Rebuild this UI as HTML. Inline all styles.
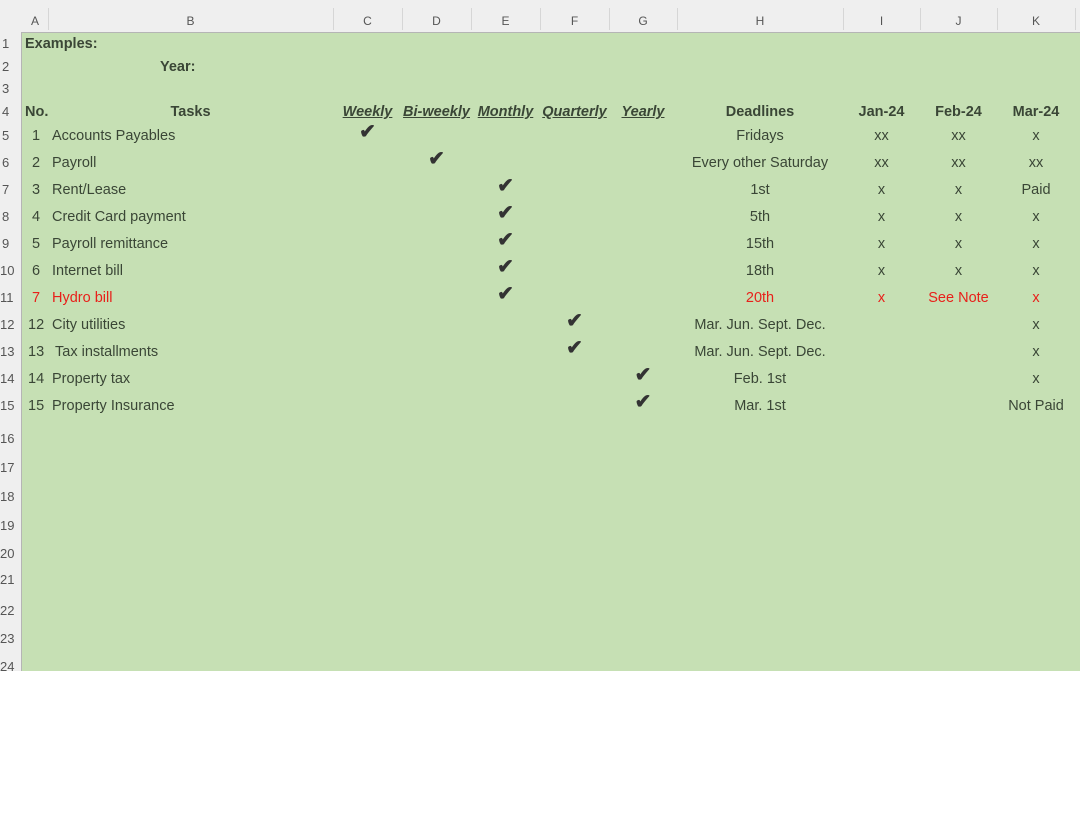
<!DOCTYPE html>
<html><head><meta charset="utf-8"><style>
body{margin:0;width:1080px;height:817px;background:#fff;position:relative;overflow:hidden;font-family:"Liberation Sans",sans-serif;}
.hdr{position:absolute;left:0;top:0;width:1080px;height:32px;background:#efefef;border-bottom:1px solid #b5b5b5;}
.rh{position:absolute;left:0;top:32px;width:21px;height:639px;background:#efefef;border-right:1px solid #b5b5b5;}
.g{position:absolute;left:22px;top:33px;width:1058px;height:638px;background:#c6e0b4;}
.t{position:absolute;height:18px;line-height:18px;font-size:14.5px;color:#3a4636;white-space:nowrap;}
.c{text-align:center;}
.b{font-weight:bold;}
.u{font-weight:bold;font-style:italic;text-decoration:underline;}
.r{color:#e8201a;}
.ch{font-size:12px;color:#555;}
.rn{font-size:13px;color:#555;}
.ck{font-size:20px;font-weight:bold;color:#333;}
.sep{position:absolute;top:8px;width:1px;height:22px;background:#d6d6d6;}
.hs{position:absolute;left:0;width:21px;height:1px;background:#d6d6d6;}
</style></head><body>
<div class="hdr"></div><div class="rh"></div><div class="g"></div>
<div class="t ch c" style="left:22px;width:26px;top:12px">A</div>
<div class="t ch c" style="left:48px;width:285px;top:12px">B</div>
<div class="t ch c" style="left:333px;width:69px;top:12px">C</div>
<div class="t ch c" style="left:402px;width:69px;top:12px">D</div>
<div class="t ch c" style="left:471px;width:69px;top:12px">E</div>
<div class="t ch c" style="left:540px;width:69px;top:12px">F</div>
<div class="t ch c" style="left:609px;width:68px;top:12px">G</div>
<div class="t ch c" style="left:677px;width:166px;top:12px">H</div>
<div class="t ch c" style="left:843px;width:77px;top:12px">I</div>
<div class="t ch c" style="left:920px;width:77px;top:12px">J</div>
<div class="t ch c" style="left:997px;width:78px;top:12px">K</div>
<div class="sep" style="left:48px"></div><div class="sep" style="left:333px"></div><div class="sep" style="left:402px"></div><div class="sep" style="left:471px"></div><div class="sep" style="left:540px"></div><div class="sep" style="left:609px"></div><div class="sep" style="left:677px"></div><div class="sep" style="left:843px"></div><div class="sep" style="left:920px"></div><div class="sep" style="left:997px"></div><div class="sep" style="left:1075px"></div>
<div class="t rn" style="left:2px;top:35px">1</div>
<div class="t rn" style="left:2px;top:58px">2</div>
<div class="t rn" style="left:2px;top:80px">3</div>
<div class="t rn" style="left:2px;top:103px">4</div>
<div class="t rn" style="left:2px;top:127px">5</div>
<div class="t rn" style="left:2px;top:154px">6</div>
<div class="t rn" style="left:2px;top:181px">7</div>
<div class="t rn" style="left:2px;top:208px">8</div>
<div class="t rn" style="left:2px;top:235px">9</div>
<div class="t rn" style="left:0px;top:262px">10</div>
<div class="t rn" style="left:0px;top:289px">11</div>
<div class="t rn" style="left:0px;top:316px">12</div>
<div class="t rn" style="left:0px;top:343px">13</div>
<div class="t rn" style="left:0px;top:370px">14</div>
<div class="t rn" style="left:0px;top:397px">15</div>
<div class="t rn" style="left:0px;top:430px">16</div>
<div class="t rn" style="left:0px;top:459px">17</div>
<div class="t rn" style="left:0px;top:488px">18</div>
<div class="t rn" style="left:0px;top:517px">19</div>
<div class="t rn" style="left:0px;top:545px">20</div>
<div class="t rn" style="left:0px;top:571px">21</div>
<div class="t rn" style="left:0px;top:602px">22</div>
<div class="t rn" style="left:0px;top:630px">23</div>
<div class="t rn" style="left:0px;top:658px">24</div>
<div class="t b" style="left:25px;top:35px">Examples:</div>
<div class="t b" style="left:160px;top:58px">Year:</div>
<div class="t b" style="left:25px;top:103px">No.</div>
<div class="t b c" style="left:48px;width:285px;top:103px">Tasks</div>
<div class="t u c" style="left:333px;width:69px;top:103px">Weekly</div>
<div class="t u c" style="left:402px;width:69px;top:103px">Bi-weekly</div>
<div class="t u c" style="left:471px;width:69px;top:103px">Monthly</div>
<div class="t u c" style="left:540px;width:69px;top:103px">Quarterly</div>
<div class="t u c" style="left:609px;width:68px;top:103px">Yearly</div>
<div class="t b c" style="left:677px;width:166px;top:103px">Deadlines</div>
<div class="t b c" style="left:843px;width:77px;top:103px">Jan-24</div>
<div class="t b c" style="left:920px;width:77px;top:103px">Feb-24</div>
<div class="t b c" style="left:997px;width:78px;top:103px">Mar-24</div>

<div class="t" style="left:32px;top:127px">1</div><div class="t" style="left:52px;top:127px">Accounts Payables</div>
<div class="t ck c" style="left:333px;width:69px;top:123px">✔</div>
<div class="t c" style="left:677px;width:166px;top:127px">Fridays</div><div class="t c" style="left:843px;width:77px;top:127px">xx</div><div class="t c" style="left:920px;width:77px;top:127px">xx</div><div class="t c" style="left:997px;width:78px;top:127px">x</div>

<div class="t" style="left:32px;top:154px">2</div><div class="t" style="left:52px;top:154px">Payroll</div>
<div class="t ck c" style="left:402px;width:69px;top:150px">✔</div>
<div class="t c" style="left:677px;width:166px;top:154px">Every other Saturday</div><div class="t c" style="left:843px;width:77px;top:154px">xx</div><div class="t c" style="left:920px;width:77px;top:154px">xx</div><div class="t c" style="left:997px;width:78px;top:154px">xx</div>

<div class="t" style="left:32px;top:181px">3</div><div class="t" style="left:52px;top:181px">Rent/Lease</div>
<div class="t ck c" style="left:471px;width:69px;top:177px">✔</div>
<div class="t c" style="left:677px;width:166px;top:181px">1st</div><div class="t c" style="left:843px;width:77px;top:181px">x</div><div class="t c" style="left:920px;width:77px;top:181px">x</div><div class="t c" style="left:997px;width:78px;top:181px">Paid</div>

<div class="t" style="left:32px;top:208px">4</div><div class="t" style="left:52px;top:208px">Credit Card payment</div>
<div class="t ck c" style="left:471px;width:69px;top:204px">✔</div>
<div class="t c" style="left:677px;width:166px;top:208px">5th</div><div class="t c" style="left:843px;width:77px;top:208px">x</div><div class="t c" style="left:920px;width:77px;top:208px">x</div><div class="t c" style="left:997px;width:78px;top:208px">x</div>

<div class="t" style="left:32px;top:235px">5</div><div class="t" style="left:52px;top:235px">Payroll remittance</div>
<div class="t ck c" style="left:471px;width:69px;top:231px">✔</div>
<div class="t c" style="left:677px;width:166px;top:235px">15th</div><div class="t c" style="left:843px;width:77px;top:235px">x</div><div class="t c" style="left:920px;width:77px;top:235px">x</div><div class="t c" style="left:997px;width:78px;top:235px">x</div>

<div class="t" style="left:32px;top:262px">6</div><div class="t" style="left:52px;top:262px">Internet bill</div>
<div class="t ck c" style="left:471px;width:69px;top:258px">✔</div>
<div class="t c" style="left:677px;width:166px;top:262px">18th</div><div class="t c" style="left:843px;width:77px;top:262px">x</div><div class="t c" style="left:920px;width:77px;top:262px">x</div><div class="t c" style="left:997px;width:78px;top:262px">x</div>

<div class="t r" style="left:32px;top:289px">7</div><div class="t r" style="left:52px;top:289px">Hydro bill</div>
<div class="t ck c r" style="left:471px;width:69px;top:285px">✔</div>
<div class="t c r" style="left:677px;width:166px;top:289px">20th</div><div class="t c r" style="left:843px;width:77px;top:289px">x</div><div class="t c r" style="left:920px;width:77px;top:289px">See Note</div><div class="t c r" style="left:997px;width:78px;top:289px">x</div>

<div class="t" style="left:28px;top:316px">12</div><div class="t" style="left:52px;top:316px">City utilities</div>
<div class="t ck c" style="left:540px;width:69px;top:312px">✔</div>
<div class="t c" style="left:677px;width:166px;top:316px">Mar. Jun. Sept. Dec.</div><div class="t c" style="left:997px;width:78px;top:316px">x</div>

<div class="t" style="left:28px;top:343px">13</div><div class="t" style="left:55px;top:343px">Tax installments</div>
<div class="t ck c" style="left:540px;width:69px;top:339px">✔</div>
<div class="t c" style="left:677px;width:166px;top:343px">Mar. Jun. Sept. Dec.</div><div class="t c" style="left:997px;width:78px;top:343px">x</div>

<div class="t" style="left:28px;top:370px">14</div><div class="t" style="left:52px;top:370px">Property tax</div>
<div class="t ck c" style="left:609px;width:68px;top:366px">✔</div>
<div class="t c" style="left:677px;width:166px;top:370px">Feb. 1st</div><div class="t c" style="left:997px;width:78px;top:370px">x</div>

<div class="t" style="left:28px;top:397px">15</div><div class="t" style="left:52px;top:397px">Property Insurance</div>
<div class="t ck c" style="left:609px;width:68px;top:393px">✔</div>
<div class="t c" style="left:677px;width:166px;top:397px">Mar. 1st</div><div class="t c" style="left:997px;width:78px;top:397px">Not Paid</div>
</body></html>
